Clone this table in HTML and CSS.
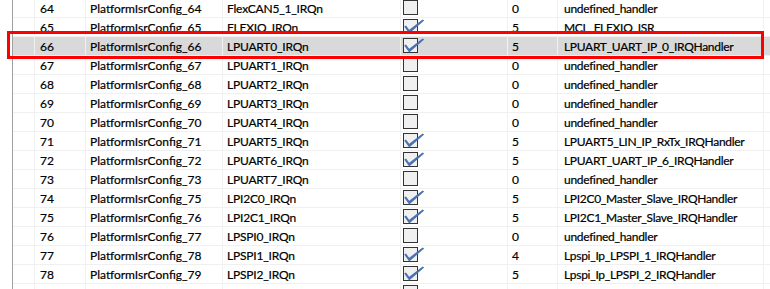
FILE: index.html
```html
<!DOCTYPE html>
<html>
<head>
<meta charset="utf-8">
<link rel="stylesheet" href="styles.css">
</head>
<body>
<div class="panel">
  <div class="table">
    <div class="row"><div class="c"></div><div class="c">64</div><div class="c">PlatformIsrConfig_64</div><div class="c">FlexCAN5_1_IRQn</div><div class="c cb"><svg class="box" width="24" height="18" viewBox="0 0 24 18"><rect x="0.5" y="1.5" width="14" height="14"/></svg></div><div class="c">0</div><div class="c">undefined_handler</div><div class="c"></div></div>
    <div class="row"><div class="c"></div><div class="c">65</div><div class="c">PlatformIsrConfig_65</div><div class="c">FLEXIO_IRQn</div><div class="c cb"><svg class="box on" width="24" height="18" viewBox="0 0 24 18"><rect x="0.5" y="1.5" width="14" height="14"/><path d="M1.2 8.6 L3 7.6 L6.2 11.8 L19.6 1.6 L21.2 2.6 L6.2 15.4 Z"/></svg></div><div class="c">5</div><div class="c">MCL_FLEXIO_ISR</div><div class="c"></div></div>
    <div class="row sel"><div class="c"></div><div class="c">66</div><div class="c">PlatformIsrConfig_66</div><div class="c">LPUART0_IRQn</div><div class="c cb"><svg class="box on" width="24" height="18" viewBox="0 0 24 18"><rect x="0.5" y="1.5" width="14" height="14"/><path d="M1.2 8.6 L3 7.6 L6.2 11.8 L19.6 1.6 L21.2 2.6 L6.2 15.4 Z"/></svg></div><div class="c">5</div><div class="c">LPUART_UART_IP_0_IRQHandler</div><div class="c"></div></div>
    <div class="row"><div class="c"></div><div class="c">67</div><div class="c">PlatformIsrConfig_67</div><div class="c">LPUART1_IRQn</div><div class="c cb"><svg class="box" width="24" height="18" viewBox="0 0 24 18"><rect x="0.5" y="1.5" width="14" height="14"/></svg></div><div class="c">0</div><div class="c">undefined_handler</div><div class="c"></div></div>
    <div class="row"><div class="c"></div><div class="c">68</div><div class="c">PlatformIsrConfig_68</div><div class="c">LPUART2_IRQn</div><div class="c cb"><svg class="box" width="24" height="18" viewBox="0 0 24 18"><rect x="0.5" y="1.5" width="14" height="14"/></svg></div><div class="c">0</div><div class="c">undefined_handler</div><div class="c"></div></div>
    <div class="row"><div class="c"></div><div class="c">69</div><div class="c">PlatformIsrConfig_69</div><div class="c">LPUART3_IRQn</div><div class="c cb"><svg class="box" width="24" height="18" viewBox="0 0 24 18"><rect x="0.5" y="1.5" width="14" height="14"/></svg></div><div class="c">0</div><div class="c">undefined_handler</div><div class="c"></div></div>
    <div class="row"><div class="c"></div><div class="c">70</div><div class="c">PlatformIsrConfig_70</div><div class="c">LPUART4_IRQn</div><div class="c cb"><svg class="box" width="24" height="18" viewBox="0 0 24 18"><rect x="0.5" y="1.5" width="14" height="14"/></svg></div><div class="c">0</div><div class="c">undefined_handler</div><div class="c"></div></div>
    <div class="row"><div class="c"></div><div class="c">71</div><div class="c">PlatformIsrConfig_71</div><div class="c">LPUART5_IRQn</div><div class="c cb"><svg class="box on" width="24" height="18" viewBox="0 0 24 18"><rect x="0.5" y="1.5" width="14" height="14"/><path d="M1.2 8.6 L3 7.6 L6.2 11.8 L19.6 1.6 L21.2 2.6 L6.2 15.4 Z"/></svg></div><div class="c">5</div><div class="c">LPUART5_LIN_IP_RxTx_IRQHandler</div><div class="c"></div></div>
    <div class="row"><div class="c"></div><div class="c">72</div><div class="c">PlatformIsrConfig_72</div><div class="c">LPUART6_IRQn</div><div class="c cb"><svg class="box on" width="24" height="18" viewBox="0 0 24 18"><rect x="0.5" y="1.5" width="14" height="14"/><path d="M1.2 8.6 L3 7.6 L6.2 11.8 L19.6 1.6 L21.2 2.6 L6.2 15.4 Z"/></svg></div><div class="c">5</div><div class="c">LPUART_UART_IP_6_IRQHandler</div><div class="c"></div></div>
    <div class="row"><div class="c"></div><div class="c">73</div><div class="c">PlatformIsrConfig_73</div><div class="c">LPUART7_IRQn</div><div class="c cb"><svg class="box" width="24" height="18" viewBox="0 0 24 18"><rect x="0.5" y="1.5" width="14" height="14"/></svg></div><div class="c">0</div><div class="c">undefined_handler</div><div class="c"></div></div>
    <div class="row"><div class="c"></div><div class="c">74</div><div class="c">PlatformIsrConfig_75</div><div class="c">LPI2C0_IRQn</div><div class="c cb"><svg class="box on" width="24" height="18" viewBox="0 0 24 18"><rect x="0.5" y="1.5" width="14" height="14"/><path d="M1.2 8.6 L3 7.6 L6.2 11.8 L19.6 1.6 L21.2 2.6 L6.2 15.4 Z"/></svg></div><div class="c">5</div><div class="c">LPI2C0_Master_Slave_IRQHandler</div><div class="c"></div></div>
    <div class="row"><div class="c"></div><div class="c">75</div><div class="c">PlatformIsrConfig_76</div><div class="c">LPI2C1_IRQn</div><div class="c cb"><svg class="box on" width="24" height="18" viewBox="0 0 24 18"><rect x="0.5" y="1.5" width="14" height="14"/><path d="M1.2 8.6 L3 7.6 L6.2 11.8 L19.6 1.6 L21.2 2.6 L6.2 15.4 Z"/></svg></div><div class="c">5</div><div class="c">LPI2C1_Master_Slave_IRQHandler</div><div class="c"></div></div>
    <div class="row"><div class="c"></div><div class="c">76</div><div class="c">PlatformIsrConfig_77</div><div class="c">LPSPI0_IRQn</div><div class="c cb"><svg class="box" width="24" height="18" viewBox="0 0 24 18"><rect x="0.5" y="1.5" width="14" height="14"/></svg></div><div class="c">0</div><div class="c">undefined_handler</div><div class="c"></div></div>
    <div class="row"><div class="c"></div><div class="c">77</div><div class="c">PlatformIsrConfig_78</div><div class="c">LPSPI1_IRQn</div><div class="c cb"><svg class="box on" width="24" height="18" viewBox="0 0 24 18"><rect x="0.5" y="1.5" width="14" height="14"/><path d="M1.2 8.6 L3 7.6 L6.2 11.8 L19.6 1.6 L21.2 2.6 L6.2 15.4 Z"/></svg></div><div class="c">4</div><div class="c">Lpspi_Ip_LPSPI_1_IRQHandler</div><div class="c"></div></div>
    <div class="row"><div class="c"></div><div class="c">78</div><div class="c">PlatformIsrConfig_79</div><div class="c">LPSPI2_IRQn</div><div class="c cb"><svg class="box on" width="24" height="18" viewBox="0 0 24 18"><rect x="0.5" y="1.5" width="14" height="14"/><path d="M1.2 8.6 L3 7.6 L6.2 11.8 L19.6 1.6 L21.2 2.6 L6.2 15.4 Z"/></svg></div><div class="c">5</div><div class="c">Lpspi_Ip_LPSPI_2_IRQHandler</div><div class="c"></div></div>
    <div class="row"><div class="c"></div><div class="c"></div><div class="c"></div><div class="c"></div><div class="c cb"><svg class="box" width="24" height="18" viewBox="0 0 24 18"><rect x="0.5" y="1.5" width="14" height="14"/></svg></div><div class="c"></div><div class="c"></div><div class="c"></div></div>
  </div>
  <div class="highlight"></div>
</div>
</body>
</html>
```
FILE: styles.css
```css
html, body {
  margin: 0;
  padding: 0;
  background: #ffffff;
  overflow: hidden;
  width: 770px;
  height: 289px;
}

.panel {
  position: relative;
  width: 770px;
  height: 289px;
  padding-left: 12px;
  box-sizing: border-box;
  font-family: Lato, "Open Sans", sans-serif;
  font-size: 12px;
  color: #000000;
  -webkit-text-stroke: 0.2px #000000;
}

.table {
  border-left: 1px solid #a0a0a0;
  margin-top: -1px;
  height: 290px;
}

.row {
  display: grid;
  grid-template-columns: 22px 51px 137px 178px 107px 50px 206px 1fr;
  height: 19px;
  box-sizing: border-box;
  border-bottom: 1px solid #f0f0f0;
}

.row.sel {
  background: #d9d9d9;
}

.c {
  box-sizing: border-box;
  border-right: 1px solid #f0f0f0;
  padding: 1px 0 0 5px;
  line-height: 17px;
  white-space: nowrap;
  overflow: visible;
}

.c:nth-child(1) { padding-left: 0; }
.c:nth-child(3) { padding-left: 4px; }
.c:nth-child(4) { padding-left: 4px; letter-spacing: -0.2px; }
.c:nth-child(6) { padding-left: 4px; }
.c:nth-child(7) { padding-left: 6px; letter-spacing: -0.3px; }
.c:nth-child(8) { border-right: none; }

.c.cb {
  padding: 0 0 0 2px;
  line-height: 0;
}

.box {
  display: block;
  overflow: visible;
}

.box rect {
  fill: #f0f0f0;
  stroke: #333333;
  stroke-width: 1;
}

.box path {
  fill: #4a72b0;
}

.highlight {
  position: absolute;
  left: 7px;
  top: 32px;
  width: 757px;
  height: 28px;
  box-sizing: border-box;
  border: 3px solid #ff0000;
  pointer-events: none;
}
```
